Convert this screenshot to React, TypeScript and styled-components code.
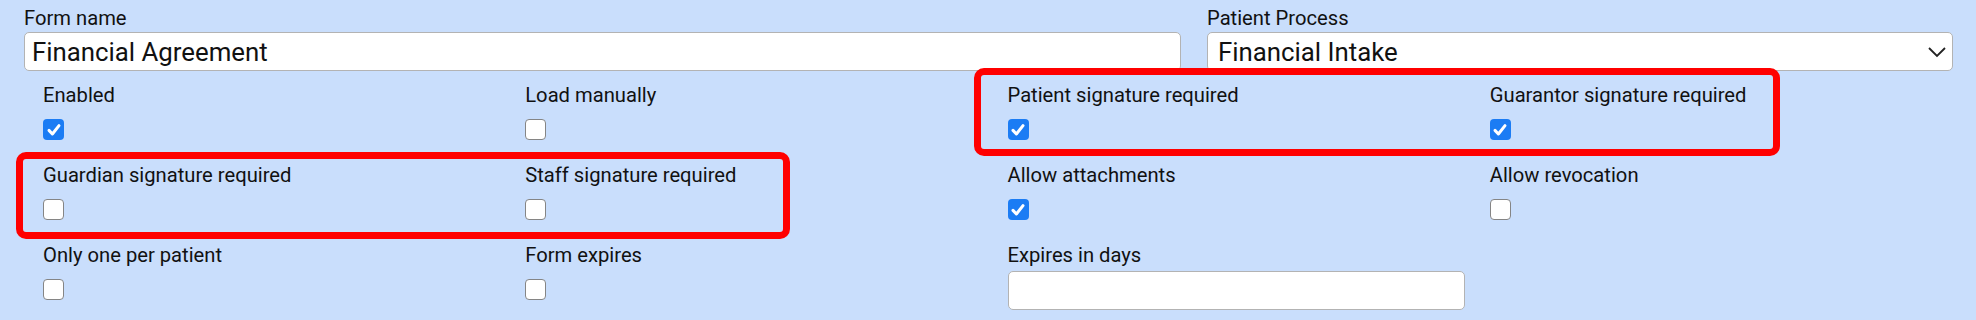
import * as React from 'react';
import styled, { createGlobalStyle } from 'styled-components';

const GlobalStyle = createGlobalStyle`
  html, body {
    margin: 0;
    padding: 0;
    background: #c9defc;
  }
  body {
    font-family: Roboto, "Liberation Sans", Arial, sans-serif;
    color: #111;
  }
`;

const Page = styled.div`
  position: relative;
  width: 1976px;
  height: 320px;
  box-sizing: border-box;
  padding: 7px 23px 0 24px;
  background: #c9defc;
  overflow: hidden;
`;

const TopRow = styled.div`
  display: grid;
  grid-template-columns: 1157fr 746fr;
  column-gap: 26px;
`;

const Field = styled.div`
  display: flex;
  flex-direction: column;
`;

const Label = styled.label`
  font-size: 20.2px;
  line-height: 23px;
  height: 23px;
  white-space: nowrap;
`;

const TextBox = styled.input<{ $width?: number; $gap?: number }>`
  box-sizing: border-box;
  width: ${(p) => (p.$width ? `${p.$width}px` : '100%')};
  height: 39px;
  margin-top: ${(p) => p.$gap ?? 2}px;
  padding: 0 7px;
  border: 1px solid #b3b3b3;
  border-radius: 5px;
  background: #fff;
  font-family: Roboto, "Liberation Sans", Arial, sans-serif;
  font-size: 25.8px;
  color: #111;
  outline: none;
`;

const SelectBox = styled.div`
  box-sizing: border-box;
  height: 39px;
  margin-top: 2px;
  padding: 0 5px 0 10px;
  border: 1px solid #b3b3b3;
  border-radius: 5px;
  background: #fff;
  display: flex;
  align-items: center;
  justify-content: space-between;
  font-size: 25.8px;
  color: #111;
`;

const Grid = styled.div`
  display: grid;
  grid-template-columns: repeat(4, 1fr);
  row-gap: 24px;
  margin-top: 13px;
`;

const Cell = styled.div`
  display: flex;
  flex-direction: column;
  align-items: flex-start;
  padding-left: 19px;
`;

const Box = styled.span<{ $checked?: boolean }>`
  box-sizing: border-box;
  width: 21px;
  height: 21px;
  margin-top: 12px;
  border-radius: 4px;
  display: flex;
  align-items: center;
  justify-content: center;
  background: ${(p) => (p.$checked ? '#1b7cf4' : '#fff')};
  border: ${(p) => (p.$checked ? 'none' : '1.5px solid #858585')};
`;

const Highlight = styled.div<{ $left: number; $top: number; $w: number; $h: number }>`
  position: absolute;
  left: ${(p) => p.$left}px;
  top: ${(p) => p.$top}px;
  width: ${(p) => p.$w}px;
  height: ${(p) => p.$h}px;
  box-sizing: border-box;
  border: 7px solid #ff0000;
  border-radius: 10px;
  pointer-events: none;
`;

function Checkbox({ checked }: { checked?: boolean }) {
  return (
    <Box $checked={checked}>
      {checked && (
        <svg width="16" height="16" viewBox="0 0 16 16">
          <path
            d="M3 8.4 L6.4 12 L13 3.6"
            fill="none"
            stroke="#fff"
            strokeWidth="3"
            strokeLinecap="round"
            strokeLinejoin="round"
          />
        </svg>
      )}
    </Box>
  );
}

const Chevron = () => (
  <svg width="20" height="12" viewBox="0 0 20 12">
    <path d="M2 2 L10 10 L18 2" fill="none" stroke="#222" strokeWidth="1.8" />
  </svg>
);

const options: { label: string; checked?: boolean }[] = [
  { label: 'Enabled', checked: true },
  { label: 'Load manually' },
  { label: 'Patient signature required', checked: true },
  { label: 'Guarantor signature required', checked: true },
  { label: 'Guardian signature required' },
  { label: 'Staff signature required' },
  { label: 'Allow attachments', checked: true },
  { label: 'Allow revocation' },
  { label: 'Only one per patient' },
  { label: 'Form expires' },
];

export default function App() {
  return (
    <Page>
      <GlobalStyle />
      <TopRow>
        <Field>
          <Label>Form name</Label>
          <TextBox defaultValue="Financial Agreement" />
        </Field>
        <Field>
          <Label>Patient Process</Label>
          <SelectBox>
            <span>Financial Intake</span>
            <Chevron />
          </SelectBox>
        </Field>
      </TopRow>
      <Grid>
        {options.map((o) => (
          <Cell key={o.label}>
            <Label>{o.label}</Label>
            <Checkbox checked={o.checked} />
          </Cell>
        ))}
        <Cell>
          <Label>Expires in days</Label>
          <TextBox $width={457} $gap={4} />
        </Cell>
      </Grid>
      <Highlight $left={974} $top={68} $w={806} $h={88} />
      <Highlight $left={16} $top={152} $w={774} $h={87} />
    </Page>
  );
}
